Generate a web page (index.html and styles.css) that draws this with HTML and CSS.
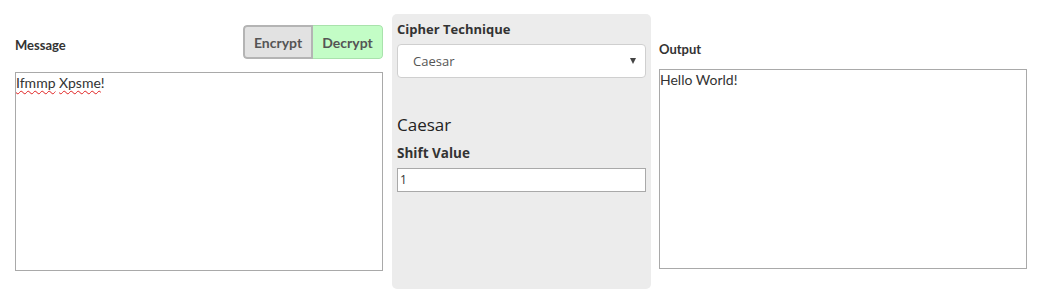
FILE: index.html
```html
<!DOCTYPE html>
<html>
<head>
<meta charset="utf-8">
<link rel="stylesheet" href="styles.css">
</head>
<body>
<div class="page">
  <section class="col col-left">
    <div class="head-row">
      <label class="label label-msg">Message</label>
      <div class="toggle">
        <span class="tbtn tbtn-enc">Encrypt</span>
        <span class="tbtn tbtn-dec">Decrypt</span>
      </div>
    </div>
    <div class="area area-msg"><span class="sp">Ifmmp</span> <span class="sp">Xpsme</span>!</div>
  </section>
  <section class="panel">
    <label class="plabel">Cipher Technique</label>
    <div class="select"><span class="select-text">Caesar</span><span class="caret"></span></div>
    <h3 class="ptitle">Caesar</h3>
    <label class="plabel plabel-shift">Shift Value</label>
    <div class="input">1</div>
  </section>
  <section class="col col-right">
    <label class="label label-out">Output</label>
    <div class="area area-out">Hello World!</div>
  </section>
</div>
</body>
</html>
```
FILE: styles.css
```css
* { box-sizing: border-box; }
html, body { margin: 0; padding: 0; background: #fff; }
body { width: 1056px; height: 298px; overflow: hidden; }
.page {
  display: flex;
  align-items: flex-start;
  padding: 14px 0 0 15px;
  font-family: Lato, "Open Sans", sans-serif;
  color: #333;
}
.col { width: 368px; display: flex; flex-direction: column; }
.col-left { margin-top: 11px; }
.head-row {
  display: flex;
  justify-content: space-between;
  align-items: flex-start;
  height: 34px;
}
.label { font-weight: bold; font-size: 13px; color: #333; display: block; }
.label-msg { margin-top: 12px; }
.toggle {
  display: flex;
  border-radius: 4px;
  overflow: hidden;
  height: 34px;
}
.tbtn {
  display: flex;
  align-items: center;
  justify-content: center;
  width: 70px;
  font-size: 14px;
  font-weight: bold;
  color: #555;
}
.tbtn-enc {
  background: #e2e2e2;
  border: 2px solid #b4b4b4;
  border-radius: 4px 0 0 4px;
}
.tbtn-dec {
  background: #c3fdc6;
  border: 1px solid #a9e2ac;
  border-left: none;
  border-radius: 0 4px 4px 0;
}
.area {
  border: 1px solid #a9a9a9;
  background: #fff;
  font-size: 14px;
  line-height: 17px;
  padding: 1px 0;
  color: #333;
}
.area-msg { margin-top: 13px; height: 199px; }
.sp { text-decoration: underline wavy #e02020; text-decoration-thickness: 1px; text-underline-offset: 2px; }
.panel {
  width: 259px;
  height: 275px;
  margin-left: 9px;
  background: #ececec;
  border-radius: 5px;
  padding: 6px 5px 0 5px;
  font-family: "Open Sans", sans-serif;
  color: #333;
}
.plabel { display: block; font-weight: bold; font-size: 13px; line-height: 18px; color: #333; }
.select {
  margin-top: 6px;
  height: 34px;
  background: #fff;
  border: 1px solid #cfcfcf;
  border-radius: 4px;
  display: flex;
  align-items: center;
  justify-content: space-between;
  padding: 0 9px 0 15px;
  font-size: 13px;
  color: #555;
}
.caret {
  width: 0;
  height: 0;
  border-left: 3.5px solid transparent;
  border-right: 3.5px solid transparent;
  border-top: 6px solid #444;
}
.ptitle {
  margin: 35px 0 0 0;
  font-size: 17px;
  font-weight: normal;
  line-height: 24px;
  color: #222;
}
.plabel-shift { margin-top: 7px; font-size: 13.5px; }
.input {
  margin-top: 6px;
  height: 24px;
  background: #fff;
  border: 1px solid #a9a9a9;
  font-size: 12px;
  line-height: 22px;
  padding: 0 2px;
  color: #333;
}
.col-right { margin-left: 8px; margin-top: 27px; }
.label-out { line-height: 16px; }
.area-out { margin-top: 12px; height: 200px; }
```
